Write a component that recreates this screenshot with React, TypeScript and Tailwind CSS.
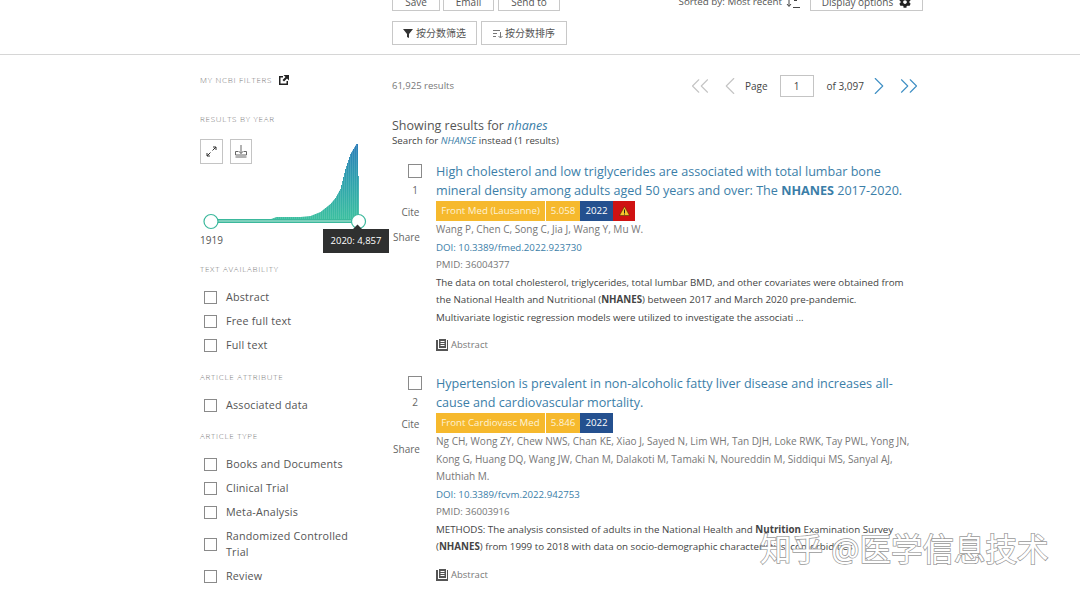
import { ChevronLeft, ChevronRight, ChevronsLeft, ChevronsRight } from 'lucide-react';
import { FaCog } from 'react-icons/fa';

const font = '[font-family:"Open_Sans","Noto_Sans_CJK_SC",sans-serif]';

// year histogram, one bar per px column
const points = [
  [268, 221], [276, 218], [300, 218], [310, 217], [320, 213], [330, 205], [335, 199], [340, 190],
  [345, 170], [350, 155], [353, 150], [356, 145], [357, 145],
];

function yearBars() {
  const bars = [];
  for (let x = 268; x <= 357; x++) {
    let i = 0;
    while (i < points.length - 2 && points[i + 1][0] < x) i++;
    const [x0, y0] = points[i];
    const [x1, y1] = points[i + 1];
    bars.push({ x, y: y0 + ((y1 - y0) * (x - x0)) / (x1 - x0) });
  }
  bars.push({ x: 358, y: 177 });
  return bars;
}

function Histogram() {
  return (
    <svg width="190" height="92" viewBox="200 140 190 92" className="block">
      <defs>
        <linearGradient id="bars" gradientUnits="userSpaceOnUse" x1="0" y1="145" x2="0" y2="221">
          <stop offset="0" stopColor="#2b7db8" />
          <stop offset="0.5" stopColor="#2fa3ad" />
          <stop offset="1" stopColor="#3cc09f" />
        </linearGradient>
      </defs>
      {yearBars().map((b) => (
        <rect key={b.x} x={b.x} y={b.y} width="1" height={221 - b.y} fill="url(#bars)" opacity={b.x % 2 ? 1 : 0.88} />
      ))}
      <rect x="211" y="220" width="148" height="4" fill="#3bb89c" />
      <rect x="211" y="221.500" width="148" height="1" fill="#bfe8dc" />
      <circle cx="211" cy="222.500" r="7" fill="#fff" stroke="#3bb89c" strokeWidth="1.2" />
      <circle cx="358.500" cy="222.500" r="7" fill="#fff" stroke="#3bb89c" strokeWidth="1.2" />
    </svg>
  );
}

function Heading({ children, className = '' }: { children: React.ReactNode; className?: string }) {
  return <div className={`text-[8px] font-light tracking-[0.75px] uppercase text-[#777] leading-[12px] ${className}`}>{children}</div>;
}

function Check({ label, className = '' }: { label: React.ReactNode; className?: string }) {
  return (
    <div className={`flex items-center gap-[9px] pl-[4px] ${className}`}>
      <span className="w-[13px] h-[13px] shrink-0 border border-[#8a8a8a] bg-white" />
      <span className="text-[10.750px] tracking-[0.2px] leading-[16px] text-[#555]">{label}</span>
    </div>
  );
}

function Btn({ children, className = '' }: { children: React.ReactNode; className?: string }) {
  return (
    <div className={`h-[24px] flex items-center justify-center border border-[#c8c8c8] text-[10px] text-[#555] bg-white ${className}`}>
      {children}
    </div>
  );
}

function SortIcon({ className = '' }: { className?: string }) {
  return (
    <svg width="14" height="11" viewBox="0 0 14 11" className={className} fill="none" stroke="currentColor" strokeWidth="1">
      <path d="M3 0v9M1 7l2 2.500L5 7" />
      <path d="M8 3.500h3M7 10.500h7" />
    </svg>
  );
}

function Sidebar() {
  return (
    <aside className="w-[192px] shrink-0 pt-[19px]">
      <div className="flex items-center gap-[7px] h-[12px]">
        <Heading>My NCBI Filters</Heading>
        <svg width="10" height="10" viewBox="0 0 10 10" className="text-[#222]" fill="currentColor">
          <path d="M0 1h4v1.500H1.500v6h6V6H9v4H0z" />
          <path d="M4.500 0H10v5.500L8 3.500 5 6.500 3.500 5l3-3z" />
        </svg>
      </div>
      <Heading className="mt-[27px]">Results by year</Heading>
      <div className="relative mt-[14px] h-[93px]">
        <div className="absolute left-0 top-0 flex gap-[7px]">
          <div className="w-[23px] h-[25px] border border-[#c4c4c4] flex items-center justify-center">
            <svg width="11" height="11" viewBox="0 0 11 11" fill="none" stroke="#333" strokeWidth="1">
              <path d="M6.500 4.500 10 1M7 1h3v3M4.500 6.500 1 10M4 10H1V7" />
            </svg>
          </div>
          <div className="w-[22px] h-[25px] border border-[#c4c4c4] flex items-center justify-center">
            <svg width="12" height="13" viewBox="0 0 12 13" fill="none" stroke="#666" strokeWidth="1">
              <path d="M6 0v8.500M3.500 6 6 8.500 8.500 6M3 6.500H0.500v3.500h11V6.500H9M0.500 12h11" />
            </svg>
          </div>
        </div>
        <Histogram />
      </div>
      <div className="relative h-[16px] text-[10px] leading-[16px] text-[#555]">
        1919
        <div className="absolute left-[123px] top-[-3px] w-[66px] h-[24px] bg-[#2f3030] text-white text-[9.500px] flex items-center justify-center">
          <span className="absolute left-[31px] top-[-3px] w-[7px] h-[7px] bg-[#2f3030] rotate-45" />
          <span className="relative">2020: 4,857</span>
        </div>
      </div>
      <Heading className="mt-[15px]">Text availability</Heading>
      <div className="mt-[14px] flex flex-col gap-[8px]">
        <Check label="Abstract" />
        <Check label="Free full text" />
        <Check label="Full text" />
      </div>
      <Heading className="mt-[18px]">Article attribute</Heading>
      <Check label="Associated data" className="mt-[14px]" />
      <Heading className="mt-[17px]">Article type</Heading>
      <div className="mt-[14px] flex flex-col gap-[8px]">
        <Check label="Books and Documents" />
        <Check label="Clinical Trial" />
        <Check label="Meta-Analysis" />
        <Check label={<>Randomized Controlled<br />Trial</>} />
        <Check label="Review" />
      </div>
    </aside>
  );
}

function Badges({ journal, score, warn }: { journal: string; score: string; warn?: boolean }) {
  return (
    <div className="mt-px flex h-[20px] items-stretch text-[9.700px] leading-[20px] text-center">
      <span className="w-[109px] bg-[#f6b92d] text-[#fdf3d8]">{journal}</span>
      <span className="ml-px w-[34px] bg-[#f6b92d] text-[#fdf3d8]">{score}</span>
      <span className="w-[33px] bg-[#24508f] text-white">2022</span>
      {warn && (
        <span className="w-[22px] bg-[#cf1212] flex items-center justify-center">
          <svg width="11" height="10" viewBox="0 0 11 10">
            <path d="M5.500 0.500 L10.500 9.500 L0.500 9.500 Z" fill="#f6c82d" stroke="#3a2a00" strokeWidth="0.500" />
            <rect x="5" y="3.500" width="1" height="3.500" fill="#222" />
            <rect x="5" y="7.500" width="1" height="1" fill="#222" />
          </svg>
        </span>
      )}
    </div>
  );
}

function Article({
  num, title, journal, score, warn, authors, doi, pmid, body, className = '',
}: {
  num: string; title: React.ReactNode; journal: string; score: string; warn?: boolean;
  authors: React.ReactNode; doi: string; pmid: string; body: React.ReactNode; className?: string;
}) {
  return (
    <article className={`flex ${className}`}>
      <div className="w-[44px] shrink-0 flex flex-col items-center text-[10px] text-[#666]">
        <span className="ml-[2px] mt-[2px] w-[14px] h-[14px] border border-[#8a8a8a]" />
        <span className="mt-[5px] leading-[14px] ml-[2px]">{num}</span>
        <span className="mt-[7px] leading-[16px] -ml-[7px]">Cite</span>
        <span className="mt-[9px] leading-[16px] -ml-[15px]">Share</span>
      </div>
      <div className="w-[480px]">
        <h3 className="text-[12.600px] leading-[19px] font-normal text-[#3b7ea8]">{title}</h3>
        <Badges journal={journal} score={score} warn={warn} />
        <div className="text-[10.050px] leading-[17.500px] text-[#777]">{authors}</div>
        <div className="text-[9.700px] leading-[17.500px] text-[#3b7ea8]">DOI: {doi}</div>
        <div className="text-[9.700px] leading-[17.500px] text-[#777]">PMID: {pmid}</div>
        <div className="text-[9.750px] leading-[17.500px] text-[#444]">{body}</div>
        <div className="mt-[12px] flex items-center gap-[3px] text-[9.500px] leading-[14px] text-[#777]">
          <svg width="12" height="12" viewBox="0 0 12 12" className="text-[#555]">
            <path fill="currentColor" fillRule="evenodd" d="M0 1h2v9h9V1h1v11H0zM3 0h7v9H3zM4.500 2v1h4V2zm0 2v1h4V4zm0 2v1h4V6z" />
          </svg>
          Abstract
        </div>
      </div>
    </article>
  );
}

export default function App() {
  return (
    <div className={`relative w-[1080px] h-[594px] overflow-hidden bg-white ${font}`}>
      <header className="flow-root h-[55px] border-b border-[#d6d6d6] pl-[392px] pr-[157px]">
        <div className="flex items-center -mt-[13px] h-[24px]">
          <Btn className="w-[48px] pt-[6px]">Save</Btn>
          <Btn className="w-[51px] ml-[3px] pt-[6px]">Email</Btn>
          <Btn className="w-[62px] ml-[4px] pt-[6px]">Send to</Btn>
          <div className="ml-auto pt-[6px] flex items-center gap-[4px] text-[9.800px] text-[#555]">
            Sorted by: Most recent
            <SortIcon className="text-[#444]" />
          </div>
          <Btn className="w-[113px] ml-[10px] gap-[6px] pt-[6px] text-[9.700px]">
            Display options
            <FaCog size={12} className="text-[#222]" />
          </Btn>
        </div>
        <div className="flex mt-[10px] gap-[4px]">
          <Btn className="w-[85px] gap-[3px] text-[10.400px]">
            <svg width="10" height="10" viewBox="0 0 10 10"><path d="M0 1h10L6 6v4L4 9V6z" fill="#333" /></svg>
            按分数筛选
          </Btn>
          <Btn className="w-[86px] gap-[2px] text-[10.400px]">
            <svg width="10" height="9" viewBox="0 0 10 9" fill="none" stroke="#777" strokeWidth="1">
              <path d="M0 1.500h7M0 4.500h4M0 7.500h3M7.500 3v5.500M5.500 7l2 2 2-2" />
            </svg>
            按分数排序
          </Btn>
        </div>
      </header>
      <div className="flex pl-[200px]">
        <Sidebar />
        <main className="w-[532px]">
          <div className="flex items-center h-[24px] mt-[19px]">
            <span className="text-[9.500px] text-[#777]">61,925 results</span>
            <div className="ml-auto flex items-center text-[10px] text-[#444]">
              <ChevronsLeft size={30} strokeWidth={0.9} className="text-[#c4c4c4]" />
              <ChevronLeft size={30} strokeWidth={0.9} className="text-[#c4c4c4]" />
              <span>Page</span>
              <span className="ml-[12px] w-[34px] h-[22px] border border-[#c4c4c4] flex items-center justify-center">1</span>
              <span className="ml-[13px]">of 3,097</span>
              <ChevronRight size={30} strokeWidth={0.9} className="text-[#3f8fc4]" />
              <ChevronsRight size={30} strokeWidth={0.9} className="text-[#3f8fc4]" />
            </div>
          </div>
          <div className="mt-[20px] text-[12.500px] leading-[16px] text-[#555]">
            Showing results for <em className="text-[#3b7ea8]">nhanes</em>
          </div>
          <div className="text-[9.700px] leading-[14px] text-[#444]">
            Search for <em className="text-[#3b7ea8]">NHANSE</em> instead (1 results)
          </div>
          <Article
            className="mt-[14px]"
            num="1"
            title={<>High cholesterol and low triglycerides are associated with total lumbar bone mineral density among adults aged 50 years and over: The <b>NHANES</b> 2017-2020.</>}
            journal="Front Med (Lausanne)"
            score="5.058"
            warn
            authors="Wang P, Chen C, Song C, Jia J, Wang Y, Mu W."
            doi="10.3389/fmed.2022.923730"
            pmid="36004377"
            body={<>The data on total cholesterol, triglycerides, total lumbar BMD, and other covariates were obtained from<br />the National Health and Nutritional (<b>NHANES</b>) between 2017 and March 2020 pre-pandemic.<br />Multivariate logistic regression models were utilized to investigate the associati ...</>}
          />
          <Article
            className="mt-[22px]"
            num="2"
            title="Hypertension is prevalent in non-alcoholic fatty liver disease and increases all-cause and cardiovascular mortality."
            journal="Front Cardiovasc Med"
            score="5.846"
            authors={<>Ng CH, Wong ZY, Chew NWS, Chan KE, Xiao J, Sayed N, Lim WH, Tan DJH, Loke RWK, Tay PWL, Yong JN,<br />Kong G, Huang DQ, Wang JW, Chan M, Dalakoti M, Tamaki N, Noureddin M, Siddiqui MS, Sanyal AJ,<br />Muthiah M.</>}
            doi="10.3389/fcvm.2022.942753"
            pmid="36003916"
            body={<>METHODS: The analysis consisted of adults in the National Health and <b>Nutrition</b> Examination Survey<br />(<b>NHANES</b>) from 1999 to 2018 with data on socio-demographic characteristics, comorbidities</>}
          />
        </main>
      </div>
      <div className="absolute left-[760px] top-[531px] text-[31.500px] leading-[36px] text-white [-webkit-text-stroke:1.5px_#999] [paint-order:stroke_fill] whitespace-nowrap">
        知乎 @医学信息技术
      </div>
    </div>
  );
}
